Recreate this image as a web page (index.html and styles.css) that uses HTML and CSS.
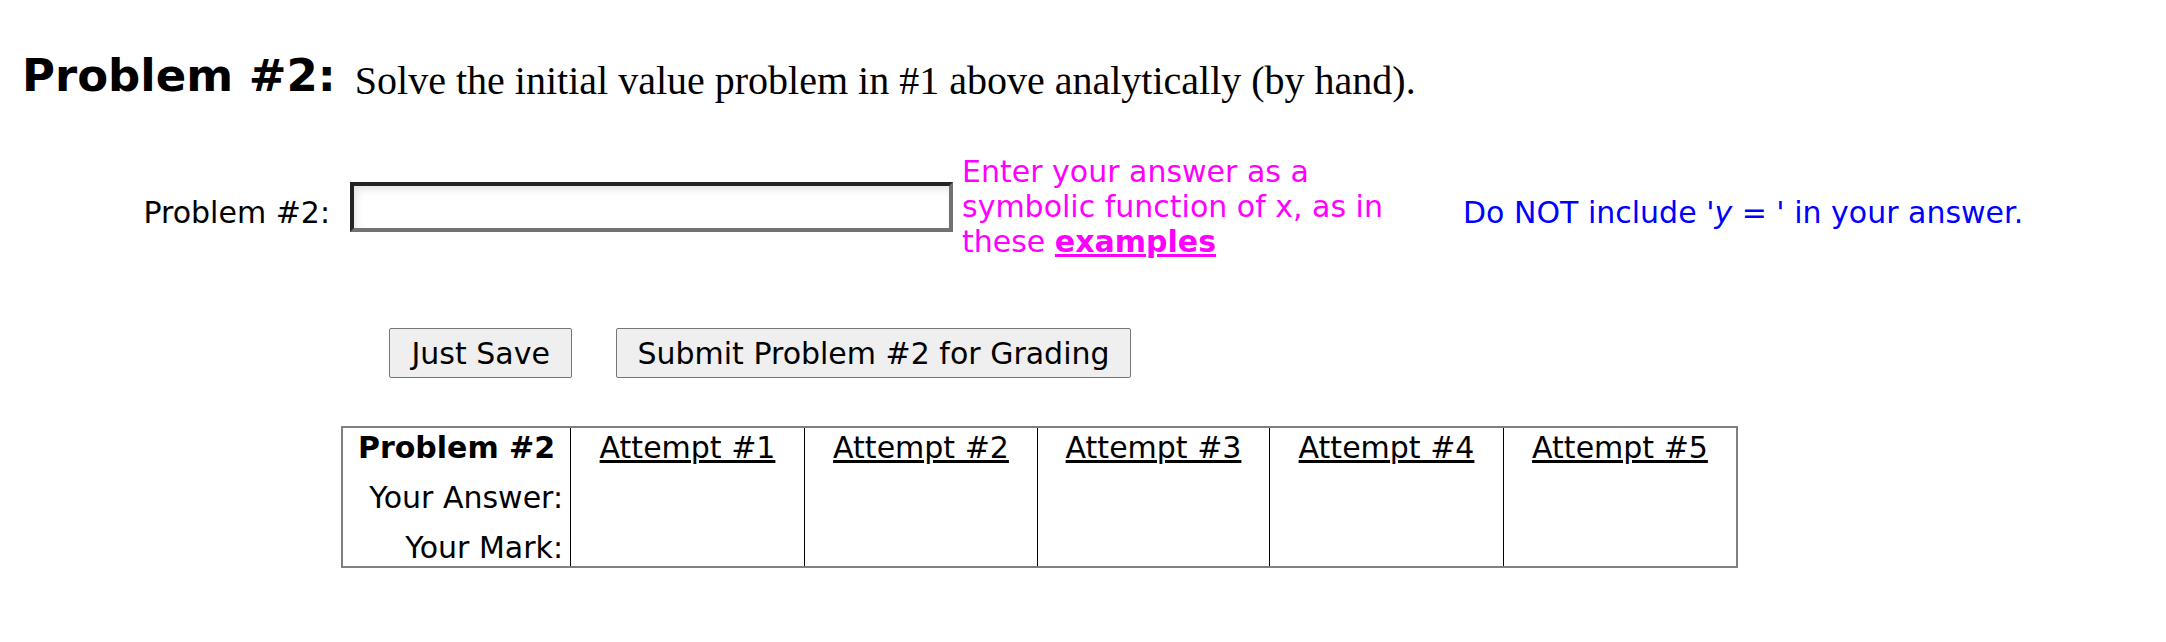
FILE: index.html
```html
<!DOCTYPE html>
<html lang="en">
<head>
<meta charset="utf-8">
<title>Problem #2</title>
<link rel="stylesheet" href="styles.css">
</head>
<body>
<div class="page">
  <div class="title">Problem #2:<span class="desc">Solve the initial value problem in #1 above analytically (by hand).</span></div>

  <div class="form-row">
    <label class="label" for="answer">Problem #2:</label>
    <input class="answer" id="answer" type="text">
    <div class="hint">Enter your answer as a<br>symbolic function of x, as in<br>these <a class="hint-link" href="#">examples</a></div>
    <div class="note">Do NOT include '<i>y</i> = ' in your answer.</div>
  </div>

  <div class="actions">
    <button class="btn btn-save" type="button">Just Save</button>
    <button class="btn" type="button">Submit Problem #2 for Grading</button>
  </div>

  <table class="attempts">
    <colgroup>
      <col class="c0"><col class="c1"><col class="c2"><col class="c3"><col class="c4"><col class="c5">
    </colgroup>
    <tr>
      <th class="head">Problem #2</th>
      <th class="att"><a href="#">Attempt #1</a></th>
      <th class="att"><a href="#">Attempt #2</a></th>
      <th class="att"><a href="#">Attempt #3</a></th>
      <th class="att"><a href="#">Attempt #4</a></th>
      <th class="att"><a href="#">Attempt #5</a></th>
    </tr>
    <tr>
      <td class="rowlabel">Your Answer:</td>
      <td></td><td></td><td></td><td></td><td></td>
    </tr>
    <tr class="last">
      <td class="rowlabel">Your Mark:</td>
      <td></td><td></td><td></td><td></td><td></td>
    </tr>
  </table>
</div>
</body>
</html>
```

FILE: styles.css
```css
html, body {
  margin: 0;
  padding: 0;
  background: #ffffff;
}

body {
  font-family: "DejaVu Sans", Verdana, sans-serif;
  font-size: 30px;
  line-height: 35px;
  color: #000000;
}

.page {
  padding-left: 22px;
}

.title {
  margin-top: 51px;
  font-family: "DejaVu Sans", Verdana, sans-serif;
  font-weight: bold;
  font-size: 45px;
  line-height: 50px;
  white-space: nowrap;
}

.desc {
  font-family: "Liberation Serif", "Times New Roman", serif;
  font-weight: normal;
  font-size: 40px;
  margin-left: 19px;
  vertical-align: -3px;
}

.form-row {
  margin-top: 48px;
  display: flex;
  align-items: center;
}

.label {
  width: 308px;
  margin-right: 20px;
  padding-top: 12px;
  text-align: right;
  white-space: nowrap;
}

.answer {
  box-sizing: border-box;
  width: 603px;
  height: 50px;
  margin: 0;
  padding: 0 8px;
  border-width: 4px;
  border-style: solid;
  border-color: #242424 #727272 #727272 #242424;
  background: #ffffff;
  box-shadow: inset 3px 4px 7px rgba(0, 0, 0, 0.10);
  font-family: "DejaVu Sans", Verdana, sans-serif;
  font-size: 30px;
  outline: none;
}

.hint {
  width: 501px;
  margin-left: 9px;
  color: #ff00ff;
  white-space: nowrap;
}

.hint-link {
  color: #ff00ff;
  font-weight: bold;
  text-decoration: underline;
}

.note {
  padding-top: 12px;
  color: #0000ff;
  white-space: nowrap;
}

.actions {
  margin-top: 69px;
  padding-left: 367px;
  display: flex;
  gap: 44px;
}

.btn {
  box-sizing: border-box;
  height: 50px;
  margin: 0;
  padding: 6px 20px;
  border: 1px solid #767676;
  border-radius: 2px;
  background: #efefef;
  color: #000000;
  font-family: "DejaVu Sans", Verdana, sans-serif;
  font-size: 30px;
  line-height: 35px;
  white-space: nowrap;
}

.btn-save {
  padding-left: 21.5px;
  padding-right: 21.5px;
}

.attempts {
  margin-top: 48px;
  margin-left: 319px;
  width: 1397px;
  table-layout: fixed;
  border-collapse: separate;
  border-spacing: 0;
  border: 2px solid #808080;
}

.c0 { width: 227px; }
.c1 { width: 234px; }
.c2 { width: 233px; }
.c3 { width: 232px; }
.c4 { width: 234px; }
.c5 { width: 233px; }

.attempts th,
.attempts td {
  padding: 2px 7px 13px 7px;
  line-height: 35px;
  vertical-align: top;
  border-left: 1px solid #000000;
  white-space: nowrap;
}

.attempts th:first-child,
.attempts td:first-child {
  border-left: none;
}

.attempts .last td {
  padding-bottom: 1px;
}

.head {
  font-weight: bold;
  text-align: center;
}

.att {
  font-weight: normal;
  text-align: center;
}

.att a {
  color: #000000;
  text-decoration: underline;
}

.rowlabel {
  text-align: right;
}
```
